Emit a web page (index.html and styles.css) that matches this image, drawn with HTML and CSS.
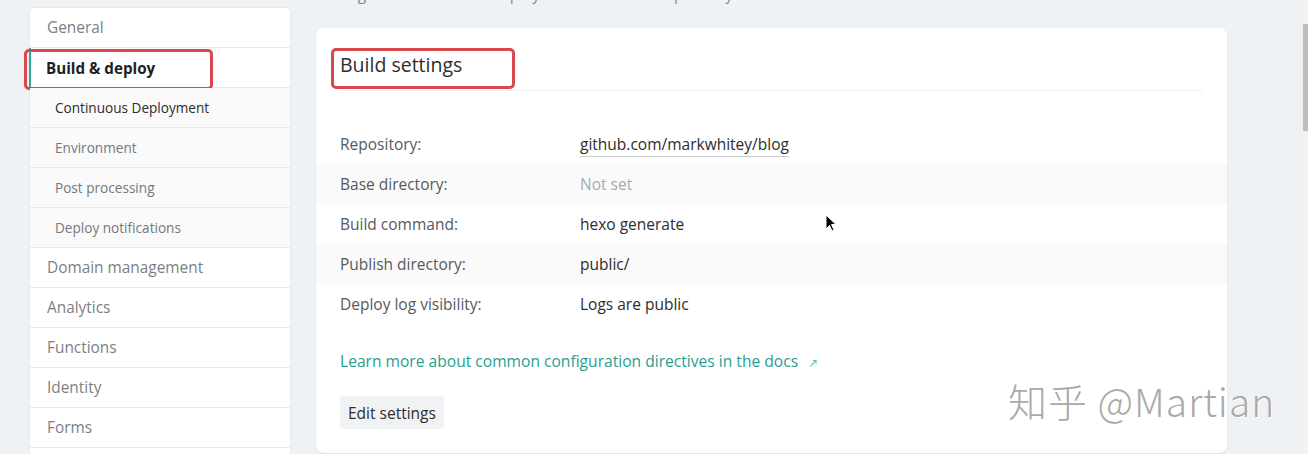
FILE: index.html
```html
<!DOCTYPE html>
<html lang="en">

<head>
	<meta charset="utf-8" />
	<title>Build &amp; deploy</title>
	<link rel="stylesheet" href="styles.css">
</head>

<body>
	<div class="page">
		<ul class="sidenav">
			<li class="item">General</li>
			<li class="item active">Build &amp; deploy<span class="mark mark-nav"></span></li>
			<li class="sub current">Continuous Deployment</li>
			<li class="sub">Environment</li>
			<li class="sub">Post processing</li>
			<li class="sub">Deploy notifications</li>
			<li class="item">Domain management</li>
			<li class="item">Analytics</li>
			<li class="item">Functions</li>
			<li class="item">Identity</li>
			<li class="item">Forms</li>
			<li class="item filler"></li>
		</ul>
		<main class="content">
			<p class="intro">Settings for Continuous Deployment from a Git repository.</p>
			<section class="card">
				<div class="card-head">
					<h2>Build settings</h2>
					<span class="mark mark-head"></span>
				</div>
				<dl class="settings">
					<div class="row">
						<dt>Repository:</dt>
						<dd><a class="repo">github.com/markwhitey/blog</a></dd>
					</div>
					<div class="row alt">
						<dt>Base directory:</dt>
						<dd class="muted">Not set</dd>
					</div>
					<div class="row">
						<dt>Build command:</dt>
						<dd>hexo generate</dd>
					</div>
					<div class="row alt">
						<dt>Publish directory:</dt>
						<dd>public/</dd>
					</div>
					<div class="row">
						<dt>Deploy log visibility:</dt>
						<dd>Logs are public</dd>
					</div>
				</dl>
				<a class="docs">Learn more about common configuration directives in the docs <span class="ext">&#8599;</span></a>
				<div class="actions">
					<button class="btn">Edit settings</button>
				</div>
			</section>
		</main>
	</div>
	<div class="watermark">知乎 @Martian</div>
	<svg class="cursor" viewBox="0 0 12 19" width="12" height="19">
		<path d="M1 1 L1 15 L4.5 11.5 L7 17 L9 16 L6.5 10.5 L11 10.5 Z" fill="#000" stroke="#fff" stroke-width="1"></path>
	</svg>
	<div class="scrollbar"><div class="thumb"></div></div>
</body>

</html>
```
FILE: styles.css
```css
* {
	box-sizing: border-box;
}

body {
	margin: 0;
	height: 454px;
	overflow: hidden;
	background: #eff2f5;
	font-family: 'Open Sans', 'Noto Sans', sans-serif;
	color: #333;
}

.page {
	display: flex;
	align-items: flex-start;
	gap: 25px;
	padding-left: 29px;
}

.sidenav {
	list-style: none;
	margin: 7px 0 0;
	padding: 0;
	width: 262px;
	background: #fff;
	border: 1px solid #e6e9ec;
	border-bottom: 0;
	border-radius: 5px 5px 0 0;
}

.sidenav li {
	position: relative;
	height: 40px;
	display: flex;
	align-items: center;
	border-bottom: 1px solid #e6e9ec;
}

.item {
	padding-left: 17px;
	font-size: 15.4px;
	color: #7b7f83;
}

.item.active {
	color: #1d1f21;
	font-weight: 700;
	font-size: 15.2px;
	border-left: 2px solid #2fa69c;
	padding-left: 15px;
	margin-left: -1px;
}

.sub {
	padding-left: 25px;
	font-size: 13.6px;
	color: #74787c;
	background: #fafafa;
}

.sub.current {
	color: #2a2c2e;
}

.mark {
	position: absolute;
	border: 3px solid #d9484b;
	border-radius: 5px;
}

.mark-nav {
	left: -7px;
	top: 1px;
	width: 189px;
	height: 41px;
}

.content {
	width: 911px;
}

.intro {
	margin: -17px 0 0;
	height: 20px;
	font-size: 15.5px;
	color: #888;
}

.card {
	margin-top: 25px;
	background: #fff;
	border-radius: 8px;
	box-shadow: 0 1px 2px rgba(0, 0, 0, 0.08);
	padding-bottom: 24px;
}

.card-head {
	position: relative;
	margin: 0 24px;
	padding-top: 23px;
	border-bottom: 1px solid #eef0f2;
	height: 63px;
}

.card-head h2 {
	margin: 0;
	font-size: 19.5px;
	font-weight: 400;
	color: #2d2d2d;
}

.mark-head {
	left: -9px;
	top: 20px;
	width: 184px;
	height: 41px;
}

.settings {
	margin: 33px 0 0;
}

.row {
	display: flex;
	align-items: center;
	height: 40px;
	padding-left: 24px;
	font-size: 15.5px;
}

.row.alt {
	background: #fafafa;
}

.row dt {
	width: 240px;
	color: #555a5e;
}

.row dd {
	margin: 0;
	color: #2d2d2d;
}

.row dd.muted {
	color: #a8abae;
}

.repo {
	border-bottom: 1px solid #c9cccf;
	padding-bottom: 1px;
}

.docs {
	display: block;
	margin: 26px 24px 0;
	font-size: 15.6px;
	color: #2a9d90;
}

.ext {
	margin-left: 6px;
	font-size: 12px;
	color: #6cbab2;
}

.actions {
	margin: 24px 24px 0;
}

.btn {
	font-family: inherit;
	font-size: 15.5px;
	color: #2d2d2d;
	background: #f1f2f3;
	border: 0;
	border-radius: 3px;
	height: 33px;
	padding: 0 8px;
}

.watermark {
	position: absolute;
	left: 1008px;
	top: 372px;
	font-family: 'Noto Sans CJK SC', 'Noto Sans', sans-serif;
	font-size: 39px;
	font-weight: 300;
	letter-spacing: 1px;
	color: #a9a9a9;
	text-shadow: 1px 1px 0 #fff;
}

.cursor {
	position: absolute;
	left: 825px;
	top: 214px;
}

.scrollbar {
	position: absolute;
	right: 0;
	top: 0;
	width: 5px;
	height: 454px;
	background: #f3f3f3;
}

.thumb {
	margin-top: 24px;
	height: 107px;
	background: #bebebe;
}
```
